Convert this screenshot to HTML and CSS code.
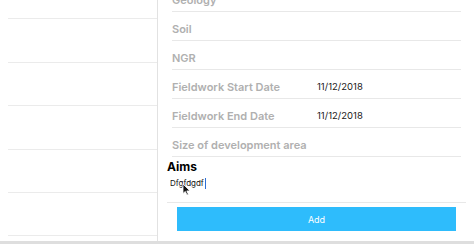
FILE: index.html
```html
<!DOCTYPE html>
<html>
<head>
<meta charset="utf-8">
<link rel="stylesheet" href="styles.css">
</head>
<body>
<div class="app">
  <div class="main">
    <aside class="sidebar">
      <div class="side-row"></div>
      <div class="side-row"></div>
      <div class="side-row"></div>
      <div class="side-row"></div>
      <div class="side-row"></div>
      <div class="side-row"></div>
      <div class="side-row"></div>
    </aside>
    <section class="form">
      <div class="field"><span class="label">Geology</span><span class="value"></span></div>
      <div class="field"><span class="label">Soil</span><span class="value"></span></div>
      <div class="field"><span class="label">NGR</span><span class="value"></span></div>
      <div class="field"><span class="label">Fieldwork Start Date</span><span class="value">11/12/2018</span></div>
      <div class="field"><span class="label">Fieldwork End Date</span><span class="value">11/12/2018</span></div>
      <div class="field"><span class="label">Size of development area</span><span class="value"></span></div>
      <div class="aims">
        <div class="aims-label">Aims</div>
        <div class="aims-text">Dfgfdgdf<span class="caret"></span></div>
        <svg class="pointer" width="9" height="13" viewBox="0 0 9 13"><path d="M1 1 L1 10.5 L3.3 8.4 L5 12 L6.4 11.4 L4.8 7.9 L8 7.9 Z" fill="#111" stroke="#fff" stroke-width="0.8" stroke-linejoin="round"/></svg>
      </div>
      <button class="add">Add</button>
    </section>
  </div>
  <div class="band"></div>
</div>
</body>
</html>
```
FILE: styles.css
```css
* { box-sizing: border-box; }
html, body { margin: 0; padding: 0; background: #fff; }
body { font-family: Inter, "Liberation Sans", sans-serif; }
.app { width: 474px; height: 244px; display: flex; flex-direction: column; overflow: hidden; }
.main { flex: 1; display: flex; overflow: hidden; }
.sidebar { width: 158px; flex: none; border-right: 1px solid #e2e2e2; padding-left: 8px; margin-top: -24px; }
.side-row { height: 43.4px; border-bottom: 1px solid #ebebeb; }
.form { flex: 1; margin-top: -17px; }
.field { height: 29px; margin-left: 14px; margin-right: 13px; border-bottom: 1px solid #e8e8e8; display: flex; align-items: center; padding-top: 5px; }
.label { width: 145px; flex: none; font-size: 11px; font-weight: 600; color: #b0b0b0; white-space: nowrap; }
.value { font-size: 9.5px; color: #1a1a1a; }
.aims { position: relative; height: 46px; margin-left: 9px; margin-right: 8px; border-bottom: 1px solid #e8e8e8; padding-top: 3px; }
.aims-label { font-size: 12px; font-weight: 700; color: #000; line-height: 14px; }
.aims-text { font-size: 8px; color: #111; line-height: 12px; margin-top: 3px; margin-left: 3px; display: flex; align-items: center; }
.caret { display: inline-block; width: 1px; height: 11px; background: #2f6fd6; margin-left: 1px; }
.pointer { position: absolute; left: 15px; top: 26px; }
.add { display: block; margin: 4px 0 0 19px; width: 279px; height: 24px; border: none; background: #2ebcfc; color: #fff; font-family: Inter, "Liberation Sans", sans-serif; font-size: 9px; padding: 0; }
.band { height: 3px; flex: none; background: #dedede; }
```
